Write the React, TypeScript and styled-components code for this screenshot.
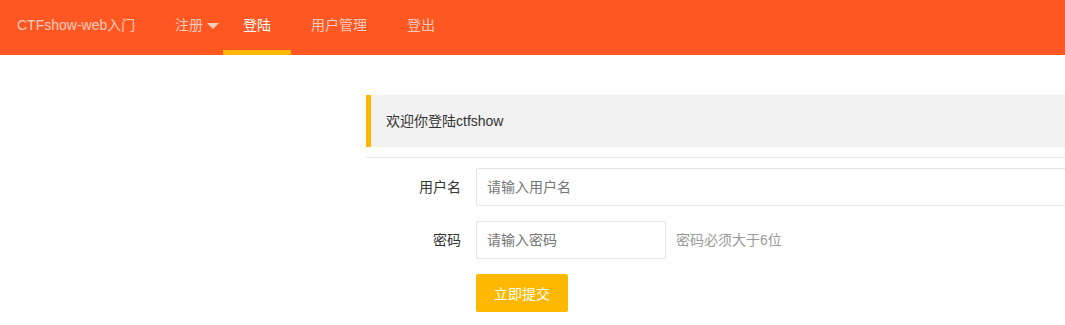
import React, { useState } from 'react';
import styled, { createGlobalStyle, css } from 'styled-components';

const GlobalStyle = createGlobalStyle`
    html, body {
        margin: 0;
        padding: 0;
        background: #fff;
        overflow: hidden;
    }
    body {
        font-family: "Liberation Sans", "Noto Sans CJK SC", sans-serif;
        font-size: 14px;
        color: #333;
    }
    * {
        box-sizing: border-box;
    }
`;

const Header = styled.div`
    height: 55px;
    background: #FF5722;
    display: flex;
    align-items: stretch;
`;

const Logo = styled.div`
    width: 155px;
    padding-left: 17px;
    line-height: 50px;
    color: rgba(255, 255, 255, .7);
    white-space: nowrap;
`;

const Nav = styled.ul`
    display: flex;
    margin: 0;
    padding: 0;
    list-style: none;
`;

const NavItem = styled.li<{ active?: boolean }>`
    position: relative;
    padding: 0 20px;
    line-height: 50px;
    color: rgba(255, 255, 255, .7);
    cursor: pointer;
    white-space: nowrap;

    ${props => props.active && css`
        color: #fff;
        &::after {
            content: '';
            position: absolute;
            left: 0;
            right: 0;
            bottom: 0;
            height: 5px;
            background: #FFB800;
        }
    `}
`;

const NavMore = styled.span`
    position: absolute;
    top: 23px;
    right: 4px;
    width: 0;
    height: 0;
    border-left: 6px solid transparent;
    border-right: 6px solid transparent;
    border-top: 6px solid rgba(255, 255, 255, .7);
`;

const Content = styled.div`
    margin: 40px 0 0 366px;
    width: 760px;
`;

const Quote = styled.blockquote`
    margin: 0 0 10px;
    padding: 15px;
    line-height: 22px;
    border-left: 5px solid #FFB800;
    border-radius: 0 2px 2px 0;
    background: #f2f2f2;
    color: #333;
`;

const Hr = styled.hr`
    margin: 10px 0;
    border: 0;
    height: 1px;
    background: #e6e6e6;
`;

const FormItem = styled.div`
    display: flex;
    align-items: flex-start;
    margin-bottom: 15px;
`;

const Label = styled.label`
    width: 110px;
    padding: 9px 15px;
    line-height: 20px;
    text-align: right;
    color: #333;
`;

const Input = styled.input<{ $inline?: boolean }>`
    min-width: 0;
    height: 38px;
    line-height: 38px;
    padding: 0 10px;
    border: 1px solid #e6e6e6;
    border-radius: 2px;
    background: #fff;
    font: inherit;
    color: #333;
    outline: none;
    flex: ${props => props.$inline ? '0 0 190px' : '1'};
    width: ${props => props.$inline ? '190px' : 'auto'};
    margin-right: ${props => props.$inline ? '10px' : '0'};

    &::placeholder {
        color: #757575;
    }
`;

const Aux = styled.div`
    padding: 9px 0;
    line-height: 20px;
    color: #999;
`;

const Button = styled.button`
    margin-left: 110px;
    height: 38px;
    line-height: 38px;
    padding: 0 18px;
    border: 0;
    border-radius: 2px;
    background: #FFB800;
    color: #fff;
    font: inherit;
    cursor: pointer;
`;

const App = () => {
    const [username, setUsername] = useState('');
    const [password, setPassword] = useState('');

    return (
        <>
            <GlobalStyle />
            <Header>
                <Logo>CTFshow-web入门</Logo>
                <Nav>
                    <NavItem>注册<NavMore /></NavItem>
                    <NavItem active>登陆</NavItem>
                    <NavItem>用户管理</NavItem>
                    <NavItem>登出</NavItem>
                </Nav>
            </Header>
            <Content>
                <Quote>欢迎你登陆ctfshow</Quote>
                <Hr />
                <form onSubmit={e => e.preventDefault()}>
                    <FormItem>
                        <Label>用户名</Label>
                        <Input
                            value={username}
                            onChange={e => setUsername(e.target.value)}
                            placeholder="请输入用户名"
                        />
                    </FormItem>
                    <FormItem>
                        <Label>密码</Label>
                        <Input
                            $inline
                            type="password"
                            value={password}
                            onChange={e => setPassword(e.target.value)}
                            placeholder="请输入密码"
                        />
                        <Aux>密码必须大于6位</Aux>
                    </FormItem>
                    <FormItem>
                        <Button type="submit">立即提交</Button>
                    </FormItem>
                </form>
            </Content>
        </>
    );
};

export default App;
